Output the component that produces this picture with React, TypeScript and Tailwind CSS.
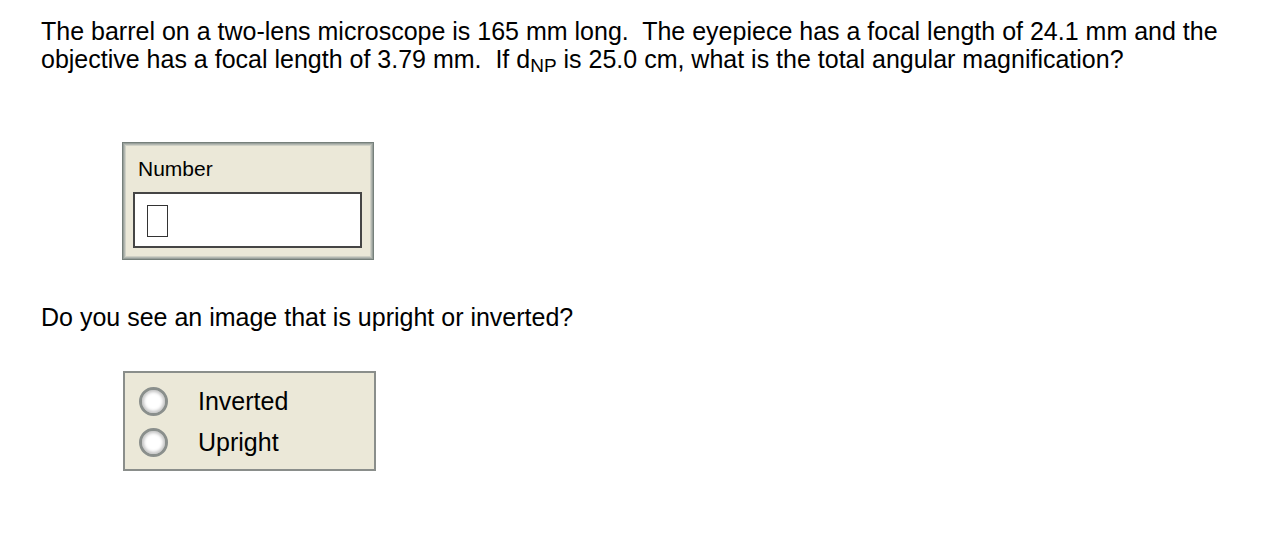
import React from 'react';

const Radio: React.FC<{ label: string }> = ({ label }) => (
  <label className="flex items-center h-[41px]">
    <span className="w-[29px] h-[29px] rounded-full border-[3px] border-[#8a8f8c] bg-white shadow-[inset_0_0_3px_2px_#c8c8c8] ml-[14px]" />
    <span className="ml-[30px] text-[25px] text-black">{label}</span>
  </label>
);

export default function App() {
  return (
    <div className="bg-white w-[1266px] h-[536px] font-['Liberation_Sans',Arial,sans-serif] text-black">
      <div className="pl-[41px] pt-[17px] text-[25px] leading-[28px]">
        <p>
          The barrel on a two-lens microscope is 165 mm long.&nbsp; The eyepiece has a focal length of 24.1 mm and the
        </p>
        <p>
          objective has a focal length of 3.79 mm.&nbsp; If d<span className="text-[19px] leading-none align-[-4px]">NP</span> is 25.0 cm, what is the total angular magnification?
        </p>
      </div>

      <div className="ml-[122px] mt-[67px] w-[252px] h-[118px] border border-[#76807b] bg-[#ebe8d8] shadow-[inset_0_0_0_1px_#99a09b,inset_0_0_0_2px_#b3b8b1,inset_0_0_0_3px_#cfd0c5] px-[10px] pt-[14px]">
        <div className="text-[21px] leading-[24px] ml-[5px]">Number</div>
        <div className="mt-[11px] w-[229px] h-[56px] border-2 border-[#454545] bg-white pl-[12px] pt-[11px]">
          <div className="w-[21px] h-[32px] border border-[#333]" />
        </div>
      </div>

      <div className="pl-[41px] mt-[43px] text-[25px] leading-[28px]">
        Do you see an image that is upright or inverted?
      </div>

      <div className="ml-[123px] mt-[40px] w-[253px] h-[100px] border-2 border-[#8a8e8b] bg-[#ebe8d8] pt-[8px]">
        <Radio label="Inverted" />
        <Radio label="Upright" />
      </div>
    </div>
  );
}
